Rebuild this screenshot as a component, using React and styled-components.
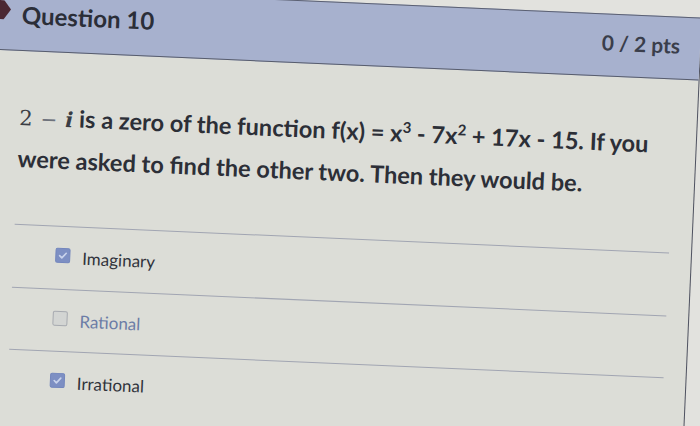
import React from 'react'
import styled, { createGlobalStyle } from 'styled-components';

const GlobalStyle = createGlobalStyle`
    html, body {
        margin: 0;
        padding: 0;
        width: 700px;
        height: 426px;
        overflow: hidden;
        background: #e2e2de;
        font-family: Lato, "Noto Sans", sans-serif;
    }
`;

const answers = [
    { label: 'Imaginary', checked: true },
    { label: 'Rational', checked: false },
    { label: 'Irrational', checked: true },
];

export default function App() {
    return (
        <>
            <GlobalStyle />
            <Tilt>
                <Card>
                    <Flag viewBox="0 0 14 20">
                        <polygon points="0,0 6,0 13,9 6,19 0,19" fill="#4b2833" />
                    </Flag>
                    <Header>
                        <Title>Question 10</Title>
                        <Points>0 / 2 pts</Points>
                    </Header>
                    <Body>
                        <QuestionText>
                            <MathNum>2</MathNum>
                            <MathOp>−</MathOp>
                            <MathVar>i</MathVar> is a zero of the function f(x) = x<Sup>3</Sup> - 7x<Sup>2</Sup> + 17x - 15. If you
                            <br />
                            were asked to find the other two. Then they would be.
                        </QuestionText>
                        <AnswerList>
                            {answers.map(a => (
                                <AnswerRow key={a.label}>
                                    <Box checked={a.checked}>
                                        {a.checked && (
                                            <svg width="11" height="11" viewBox="0 0 12 12">
                                                <path d="M2.5 6.3 L5 8.7 L9.6 3.4" fill="none" stroke="#c9d3ec" strokeWidth="1.8" strokeLinecap="round" strokeLinejoin="round" />
                                            </svg>
                                        )}
                                    </Box>
                                    <AnswerLabel muted={!a.checked}>{a.label}</AnswerLabel>
                                </AnswerRow>
                            ))}
                        </AnswerList>
                    </Body>
                </Card>
            </Tilt>
        </>
    )
}

const Tilt = styled.div`
    transform-origin: 0 0;
    transform: rotate(2.5deg);
    margin-top: -13px;
    width: 702px;
`;

const Card = styled.div`
    position: relative;
    width: 702px;
    background: #dcddd7;
    border-right: 1.5px solid #4f5260;
`;

const Flag = styled.svg`
    position: absolute;
    left: -1px;
    top: 13px;
    width: 14px;
    height: 20px;
`;

const Header = styled.div`
    box-sizing: border-box;
    height: 63px;
    padding: 12px 20px 0 23px;
    display: flex;
    justify-content: space-between;
    align-items: flex-start;
    background: #a7b1ce;
    border-top: 1.5px solid #5b6072;
    border-bottom: 1.5px solid #575c6c;
`;

const Title = styled.div`
    font-size: 24px;
    line-height: 28px;
    font-weight: 700;
    color: #2b2e38;
`;

const Points = styled.div`
    margin-top: 3px;
    font-size: 21px;
    line-height: 26px;
    font-weight: 700;
    color: #3a3e4b;
`;

const Body = styled.div`
    padding: 45px 0 20px 25px;
`;

const QuestionText = styled.div`
    font-size: 23.6px;
    line-height: 40px;
    font-weight: 700;
    color: #2c2f37;
    white-space: nowrap;
`;

const MathNum = styled.span`
    font-family: "DejaVu Serif", "Liberation Serif", serif;
    font-weight: 400;
    font-size: 21px;
    color: #3a3d44;
`;

const MathOp = styled.span`
    font-family: "DejaVu Serif", "Liberation Serif", serif;
    font-weight: 400;
    font-size: 20px;
    color: #6e727c;
    margin: 0 8px 0 8px;
`;

const MathVar = styled.span`
    font-family: "DejaVu Serif", "Liberation Serif", serif;
    font-style: italic;
    font-weight: 700;
    font-size: 21px;
    color: #3a3d44;
`;

const Sup = styled.sup`
    font-size: 15px;
    line-height: 0;
`;

const AnswerList = styled.div`
    margin-top: 46px;
    width: 655px;
`;

const AnswerRow = styled.div`
    height: 61.5px;
    display: flex;
    align-items: center;
    padding-left: 42px;
    border-top: 1.5px solid #a1a5b2;
`;

const Box = styled.div`
    box-sizing: border-box;
    width: 15px;
    height: 15px;
    margin-top: -4px;
    display: flex;
    align-items: center;
    justify-content: center;
    border-radius: 2px;
    background: ${p => (p.checked ? '#7d8fc3' : '#d3d5d3')};
    border: 1px solid ${p => (p.checked ? '#7386bd' : '#a7aab0')};
`;

const AnswerLabel = styled.span`
    margin-left: 12px;
    font-size: 17px;
    color: ${p => (p.muted ? '#6b7ca6' : '#30333b')};
`;
